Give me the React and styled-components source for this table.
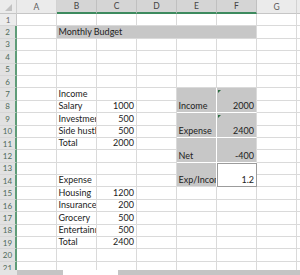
import styled, { createGlobalStyle } from 'styled-components'

const Global = createGlobalStyle`
  html, body { margin: 0; padding: 0; background: #fff; }
  body { font-family: Lato, "Liberation Sans", Arial, sans-serif; overflow: hidden; }
`

const Frame = styled.div`
  width: 300px;
  height: 275px;
  display: flex;
  flex-direction: column;
  overflow: hidden;
`

const Sheet = styled.div`
  display: grid;
  grid-template-columns: 17px repeat(7, 40px) 1fr;
  grid-template-rows: 14px repeat(21, 12.4px);
  height: 270px;
  overflow: hidden;
`

const Corner = styled.div`
  grid-column: 1;
  grid-row: 1;
  position: relative;
  background: #ebebeb;
  border-right: 1px solid #cfcfcf;
  border-bottom: 1px solid #c6c6c6;
  &::after {
    content: '';
    position: absolute;
    right: 4px;
    bottom: 2px;
    border-style: solid;
    border-width: 0 0 7px 7px;
    border-color: transparent transparent #c2c2c2 transparent;
  }
`

const ColHead = styled.div`
  grid-row: 1;
  display: flex;
  align-items: center;
  justify-content: center;
  font-size: 8.5px;
  color: ${p => (p.$sel ? '#444' : '#5c5c5c')};
  background: ${p => (p.$sel ? '#d5d5d5' : '#ebebeb')};
  border-right: 1px solid ${p => (p.$sel ? '#c0c0c0' : '#d2d2d2')};
  border-bottom: ${p => (p.$sel ? '2px solid #3d8a5e' : '1px solid #c6c6c6')};
`

const RowHead = styled.div`
  grid-column: 1;
  display: flex;
  align-items: center;
  justify-content: center;
  font-size: 8px;
  color: ${p => (p.$sel ? '#4f6a5a' : '#6a6a6a')};
  background: ${p => (p.$sel ? '#e1e1e1' : '#ececec')};
  border-right: ${p => (p.$sel ? '2px solid #5f9c78' : '1px solid #c6c6c6')};
  border-bottom: 1px solid #d6d6d6;
`

const Cell = styled.div`
  display: flex;
  align-items: flex-end;
  justify-content: ${p => (p.$num ? 'flex-end' : 'flex-start')};
  padding: 0 2px 1px 1.5px;
  font-size: 9px;
  line-height: 11px;
  color: #222;
  white-space: nowrap;
  overflow: hidden;
  position: relative;
  background: ${p => p.$fill || '#fff'};
  border-right: 1px solid ${p => p.$rb || '#dadada'};
  border-bottom: 1px solid ${p => p.$bb || '#dadada'};
  ${p => p.$box && 'border: 1px solid #9c9c9c;'}
`

const Flag = styled.span`
  position: absolute;
  left: 1px;
  top: 2px;
  border-style: solid;
  border-width: 3px 3px 0 0;
  border-color: #2a6b40 transparent transparent transparent;
`

const Scroll = styled.div`
  display: flex;
  height: 5px;
`

const Track = styled.div`
  flex: ${p => (p.$w ? `0 0 ${p.$w}px` : '1')};
  background: ${p => p.$c};
`

const COLS = ['A', 'B', 'C', 'D', 'E', 'F', 'G', 'H']
const SEL = ['B', 'C', 'D', 'E', 'F']
const GRAY = '#c7c7c7'

const cells = {
  B2: { text: 'Monthly Budget', cols: 5, fill: GRAY, rb: '#dadada' },
  B7: { text: 'Income' },
  B8: { text: 'Salary' }, C8: { text: '1000', num: true },
  B9: { text: 'Investment' }, C9: { text: '500', num: true },
  B10: { text: 'Side hustle' }, C10: { text: '500', num: true },
  B11: { text: 'Total' }, C11: { text: '2000', num: true },
  B14: { text: 'Expense' },
  B15: { text: 'Housing' }, C15: { text: '1200', num: true },
  B16: { text: 'Insurance' }, C16: { text: '200', num: true },
  B17: { text: 'Grocery' }, C17: { text: '500', num: true },
  B18: { text: 'Entertainment' }, C18: { text: '500', num: true },
  B19: { text: 'Total' }, C19: { text: '2400', num: true },
  E7: { text: 'Income', rows: 2, fill: GRAY, rb: '#fff', bb: '#fff' },
  F7: { text: '2000', num: true, rows: 2, fill: GRAY, bb: '#fff', flag: true },
  E9: { text: 'Expense', rows: 2, fill: GRAY, rb: '#fff', bb: '#fff' },
  F9: { text: '2400', num: true, rows: 2, fill: GRAY, bb: '#fff', flag: true },
  E11: { text: 'Net', rows: 2, fill: GRAY, rb: '#fff', bb: '#fff' },
  F11: { text: '-400', num: true, rows: 2, fill: GRAY, bb: '#fff' },
  E13: { text: 'Exp/Income', rows: 2, fill: GRAY, rb: '#fff' },
  F13: { text: '1.2', num: true, rows: 2, box: true },
}

function buildCells() {
  const covered = new Set()
  const out = []
  for (let r = 1; r <= 21; r++) {
    COLS.forEach((col, ci) => {
      const key = col + r
      if (covered.has(key)) return
      const c = cells[key] || {}
      const cs = c.cols || 1
      const rs = c.rows || 1
      for (let dr = 0; dr < rs; dr++)
        for (let dc = 0; dc < cs; dc++)
          if (dr || dc) covered.add(COLS[ci + dc] + (r + dr))
      out.push(
        <Cell
          key={key}
          style={{ gridColumn: `${ci + 2} / span ${cs}`, gridRow: `${r + 1} / span ${rs}` }}
          $num={c.num}
          $fill={c.fill}
          $rb={c.rb}
          $bb={c.bb}
          $box={c.box}
        >
          {c.flag && <Flag />}
          {c.text}
        </Cell>
      )
    })
  }
  return out
}

export default function App() {
  return (
    <Frame>
      <Global />
      <Sheet>
        <Corner />
        {COLS.map((c, i) => (
          <ColHead key={c} style={{ gridColumn: i + 2 }} $sel={SEL.includes(c)}>
            {c === 'H' ? '' : c}
          </ColHead>
        ))}
        {Array.from({ length: 21 }, (_, i) => (
          <RowHead key={i} style={{ gridRow: i + 2 }} $sel={i > 0}>
            {i + 1}
          </RowHead>
        ))}
        {buildCells()}
      </Sheet>
      <Scroll>
        <Track $w={17} $c="#e4e4e4" />
        <Track $w={46} $c="#c4c4c4" />
        <Track $w={55} $c="#fff" />
        <Track $c="#c4c4c4" />
      </Scroll>
    </Frame>
  )
}
